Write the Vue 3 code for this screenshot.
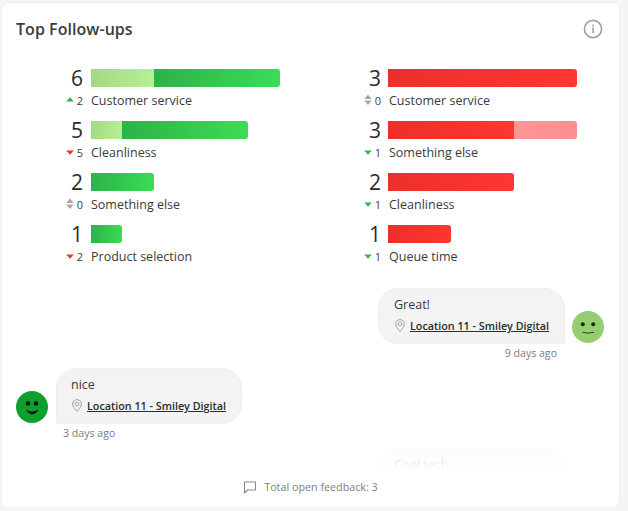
<template>
  <div class="card">
    <div class="card-header">
      <h3 class="card-title">Top Follow-ups</h3>
      <svg class="info-icon" width="20" height="20" viewBox="0 0 20 20">
        <circle cx="10" cy="10" r="8.6" fill="none" stroke="#a0a0a0" stroke-width="1.6" />
        <rect x="9.2" y="8.6" width="1.6" height="5.6" fill="#a0a0a0" />
        <rect x="9.2" y="5.6" width="1.6" height="1.7" fill="#a0a0a0" />
      </svg>
    </div>

    <div class="columns">
      <div v-for="col in columns" :key="col.key" class="column">
        <div v-for="row in col.rows" :key="row.label" class="row">
          <span class="count">{{ row.count }}</span>
          <div class="track">
            <div class="bar">
              <div
                v-for="seg in row.segs"
                :key="seg.tone"
                class="seg"
                :class="seg.tone"
                :style="{ width: Math.floor((seg.n * 189) / col.max) + 'px' }"
              ></div>
            </div>
          </div>
          <div class="delta">
            <svg width="8" height="12" viewBox="0 0 8 12">
              <path v-if="row.dir === 'up'" d="M4 3.2 L7.8 7.6 H0.2 Z" :fill="row.good ? '#33b24d' : '#f4302d'" />
              <path v-else-if="row.dir === 'down'" d="M0.2 4.4 H7.8 L4 8.8 Z" :fill="row.good ? '#33b24d' : '#f4302d'" />
              <template v-else>
                <path d="M4 0.6 L7.8 5 H0.2 Z" fill="#a8a8a8" />
                <path d="M0.2 6.6 H7.8 L4 11 Z" fill="#a8a8a8" />
              </template>
            </svg>
            <span>{{ row.delta }}</span>
          </div>
          <span class="label">{{ row.label }}</span>
        </div>
      </div>
    </div>

    <div class="feed">
      <div v-for="msg in messages" :key="msg.text" class="msg" :class="msg.side">
        <div class="msg-line">
          <svg v-if="msg.side === 'left'" class="avatar" width="32" height="32" viewBox="0 0 32 32">
            <circle cx="16" cy="16" r="16" :fill="msg.face" />
            <circle cx="12" cy="12.5" r="2.3" fill="#111" />
            <circle cx="20" cy="12.5" r="2.3" fill="#111" />
            <path d="M10.8 19.4 Q16 26.5 21.8 19.4 Q16 22.6 10.8 19.4 Z" fill="#111" stroke="#111" stroke-width="1" stroke-linejoin="round" />
          </svg>
          <div class="bubble">
            <div class="bubble-text">{{ msg.text }}</div>
            <div v-if="msg.place" class="bubble-place">
              <svg width="10" height="13" viewBox="0 0 10 13">
                <path d="M5 12.4 C3 10 0.6 7.6 0.6 5 A4.4 4.4 0 0 1 9.4 5 C9.4 7.6 7 10 5 12.4 Z" fill="none" stroke="#a3a3a3" stroke-width="1" />
                <circle cx="5" cy="5" r="1.9" fill="none" stroke="#a3a3a3" stroke-width="1" />
              </svg>
              <a class="place-link">{{ msg.place }}</a>
            </div>
          </div>
          <svg v-if="msg.side === 'right'" class="avatar" width="32" height="32" viewBox="0 0 32 32">
            <circle cx="16" cy="16" r="16" :fill="msg.face" />
            <circle cx="10.8" cy="13.3" r="2" fill="#1c2a14" />
            <circle cx="21.2" cy="13.3" r="2" fill="#1c2a14" />
            <path d="M10.8 21.4 Q16 23 21.8 21.4" fill="none" stroke="#2e4420" stroke-width="1" stroke-linecap="round" />
          </svg>
        </div>
        <div v-if="msg.time" class="msg-time">{{ msg.time }}</div>
      </div>
      <div class="feed-fade"></div>
    </div>

    <div class="card-footer">
      <svg width="14" height="13" viewBox="0 0 14 13">
        <path d="M1.5 1 H12.5 V9 H4.5 L1.5 12 Z" fill="none" stroke="#8b8b8b" stroke-width="1.1" stroke-linejoin="round" />
      </svg>
      <span>Total open feedback: 3</span>
    </div>
  </div>
</template>

<script setup>
const columns = [
  {
    key: 'good',
    max: 6,
    rows: [
      { count: 6, dir: 'up', good: true, delta: 2, label: 'Customer service', segs: [{ tone: 'green-soft', n: 2 }, { tone: 'green', n: 4 }] },
      { count: 5, dir: 'down', good: false, delta: 5, label: 'Cleanliness', segs: [{ tone: 'green-soft', n: 1 }, { tone: 'green', n: 4 }] },
      { count: 2, dir: 'same', delta: 0, label: 'Something else', segs: [{ tone: 'green', n: 2 }] },
      { count: 1, dir: 'down', good: false, delta: 2, label: 'Product selection', segs: [{ tone: 'green', n: 1 }] }
    ]
  },
  {
    key: 'bad',
    max: 3,
    rows: [
      { count: 3, dir: 'same', delta: 0, label: 'Customer service', segs: [{ tone: 'red', n: 3 }] },
      { count: 3, dir: 'down', good: true, delta: 1, label: 'Something else', segs: [{ tone: 'red', n: 2 }, { tone: 'red-soft', n: 1 }] },
      { count: 2, dir: 'down', good: true, delta: 1, label: 'Cleanliness', segs: [{ tone: 'red', n: 2 }] },
      { count: 1, dir: 'down', good: true, delta: 1, label: 'Queue time', segs: [{ tone: 'red', n: 1 }] }
    ]
  }
]

const place = 'Location 11 - Smiley Digital'

const messages = [
  { text: 'Great!', time: '9 days ago', side: 'right', face: '#97cd72', place },
  { text: 'nice', time: '3 days ago', side: 'left', face: '#0e9f2f', place },
  { text: 'Cool tech', side: 'right', face: '#97cd72' }
]
</script>

<style scoped>
.card {
  box-sizing: border-box;
  width: 617px;
  height: 504px;
  margin: 3px 0 0 2px;
  background: #fff;
  border-radius: 6px;
  box-shadow: 0 0 2px rgba(0, 0, 0, 0.08);
  display: flex;
  flex-direction: column;
  overflow: hidden;
  font-family: 'Open Sans', sans-serif;
  color: #333;
}

.card-header {
  display: flex;
  justify-content: space-between;
  align-items: center;
  height: 52px;
  padding: 0 16px 0 14px;
  flex: none;
}
.card-title { margin: 0; font-size: 16px; font-weight: 600; letter-spacing: 0.05px; color: #3b3b3b; }
.info-icon { display: block; margin-top: -1px; }

.columns {
  display: grid;
  grid-template-columns: 297px 297px;
  padding: 14px 0 0 14px;
  flex: none;
}
.column { display: flex; flex-direction: column; gap: 11px; }

.row {
  display: grid;
  grid-template-columns: 67px 189px;
  column-gap: 8px;
  row-gap: 3px;
  grid-template-rows: 18px 20px;
  align-items: center;
}
.column + .column .row { grid-template-columns: 68px 189px; column-gap: 7px; }
.column + .column .label { margin-left: 1px; }
.count { font-size: 21px; font-weight: 500; line-height: 18px; text-align: right; color: #2b2b2b; }
.track { height: 18px; }
.bar { height: 100%; width: fit-content; display: flex; border-radius: 0 3px 3px 0; overflow: hidden; }
.seg { height: 100%; }
.green { background: linear-gradient(90deg, #2db249, #3bdc55); }
.green-soft { background: linear-gradient(90deg, #a4d984, #b6ef94); }
.red { background: linear-gradient(90deg, #ec2f2b, #ff3632); }
.red-soft { background: linear-gradient(90deg, #ff9595, #f89090); }

.delta {
  display: flex;
  justify-content: flex-end;
  align-items: center;
  gap: 3px;
  font-size: 11px;
  font-weight: 500;
  color: #3c3c3c;
}
.delta svg { display: block; }
.label { font-size: 12.5px; color: #3a3a3a; white-space: nowrap; }

.feed {
  position: relative;
  flex: 1;
  min-height: 0;
  margin-top: 22px;
  padding: 0 15px 0 14px;
  overflow: hidden;
  display: flex;
  flex-direction: column;
}
.msg { flex: none; height: 80px; display: flex; flex-direction: column; }
.msg.right { align-items: flex-end; }
.msg.left { align-items: flex-start; }
.msg-line { display: flex; align-items: flex-end; gap: 7px; }
.msg.left .msg-line { gap: 8px; }
.avatar { display: block; flex: none; margin-bottom: 1px; }

.bubble {
  box-sizing: border-box;
  width: 187px;
  height: 56px;
  padding: 7px 15px 6px;
  background: #f3f3f3;
  border: 1px solid #eeeeee;
  border-radius: 20px;
}
.msg.left .bubble { width: 186px; padding-left: 14px; }
.msg.right .bubble { border-bottom-right-radius: 0; }
.msg.left .bubble { border-bottom-left-radius: 0; }
.bubble-text { font-size: 12.5px; line-height: 18px; color: #3a3a3a; }
.bubble-place { display: flex; align-items: center; gap: 5px; margin-top: 3px; padding-left: 1px; line-height: 18px; }
.bubble-place svg { display: block; flex: none; margin-top: -1px; }
.place-link { font-size: 10.75px; font-weight: 600; color: #2b2b2b; text-decoration: underline; white-space: nowrap; }

.msg-time { font-size: 10.6px; line-height: 16px; margin-top: 1px; color: #7c7c7c; }
.msg.right .msg-time { margin-right: 47px; }
.msg.left .msg-time { margin-left: 47px; }

.feed-fade {
  position: absolute;
  left: 0;
  right: 0;
  bottom: 0;
  height: 38px;
  background: linear-gradient(180deg, rgba(255, 255, 255, 0.6), #fff 80%);
}

.card-footer {
  flex: none;
  box-sizing: border-box;
  height: 29px;
  padding-bottom: 11px;
  display: flex;
  justify-content: center;
  align-items: center;
  gap: 7px;
  font-size: 10.75px;
  color: #808080;
}
.card-footer svg { display: block; }
</style>

<style>
html, body { background: #f5f5f5; }
</style>
